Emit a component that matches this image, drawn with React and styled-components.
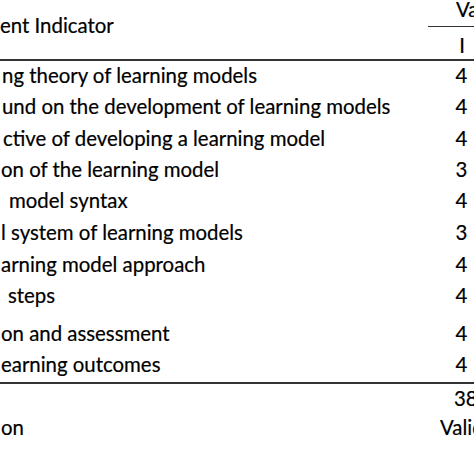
import styled, { createGlobalStyle } from 'styled-components';

const GlobalStyle = createGlobalStyle`
  html, body {
    margin: 0;
    padding: 0;
    background: #ffffff;
    overflow: hidden;
  }
`;

// height = row height in px, pad = extra space above the text
const rows = [
  { text: 'ng theory of learning models', score: 4, offset: 2, height: 31 },
  { text: 'und on the development of learning models', score: 4, offset: 2, height: 32 },
  { text: 'ctive of developing a learning model', score: 4, offset: 3, height: 31 },
  { text: 'on of the learning model', score: 3, offset: -1, height: 31 },
  { text: 'model syntax', score: 4, offset: 9, height: 32 },
  { text: 'l system of learning models', score: 3, offset: 1, height: 32 },
  { text: 'arning model approach', score: 4, offset: -1, height: 31 },
  { text: 'steps', score: 4, offset: 8, height: 31 },
  { text: 'on and assessment', score: 4, offset: -2, height: 38, pad: 7 },
  { text: 'earning outcomes', score: 4, offset: -2, height: 32 },
];

const LINE = 28;
const RULE = '#333333';

const Viewport = styled.div`
  width: 474px;
  height: 474px;
  overflow: hidden;
  font-family: Lato, "Open Sans", sans-serif;
  font-size: 20.4px;
  color: #000000;
  -webkit-text-stroke: 0.2px #000000;
`;

const Table = styled.table`
  border-collapse: collapse;
  table-layout: fixed;
  width: 560px;
  margin-top: -3px;
  white-space: nowrap;
`;

const IndicatorHead = styled.th`
  font-weight: 400;
  text-align: left;
  vertical-align: middle;
  padding: 0 0 5px 0;
  line-height: 24px;
  border-bottom: 2px solid ${RULE};
`;

const GroupHead = styled.th`
  font-weight: 400;
  text-align: left;
  padding: 0 0 5px 28px;
  line-height: 24px;
  border-bottom: 1.5px solid ${RULE};
`;

const SubHead = styled.th`
  font-weight: 400;
  text-align: center;
  padding: 6px 0 1.5px;
  line-height: 24px;
  border-bottom: 2px solid ${RULE};
`;

const BodyCell = styled.td`
  line-height: ${LINE}px;
  padding-top: ${({ $pad }) => $pad}px;
  padding-bottom: ${({ $height, $pad }) => $height - LINE - $pad}px;
  padding-left: ${({ $offset }) => $offset}px;
  text-align: ${({ $center }) => ($center ? 'center' : 'left')};
`;

const FootRow = styled.tr`
  border-top: ${({ $rule }) => ($rule ? `2px solid ${RULE}` : 'none')};
`;

const FootCell = styled.td`
  padding: ${({ $top }) => $top}px 0 0 ${({ $offset }) => $offset}px;
  line-height: ${LINE}px;
`;

export default function App() {
  return (
    <>
      <GlobalStyle />
      <Viewport>
        <Table>
          <colgroup>
            <col style={{ width: 428 }} />
            <col style={{ width: 68 }} />
            <col style={{ width: 64 }} />
          </colgroup>
          <thead>
            <tr>
              <IndicatorHead rowSpan={2}>ent Indicator</IndicatorHead>
              <GroupHead colSpan={2}>Validator</GroupHead>
            </tr>
            <tr>
              <SubHead>I</SubHead>
              <SubHead>II</SubHead>
            </tr>
          </thead>
          <tbody>
            {rows.map((row) => {
              const pad = row.pad || 0;
              return (
                <tr key={row.text}>
                  <BodyCell $offset={row.offset} $pad={pad} $height={row.height}>
                    {row.text}
                  </BodyCell>
                  <BodyCell $center $offset={0} $pad={pad} $height={row.height}>
                    {row.score}
                  </BodyCell>
                  <BodyCell $center $offset={0} $pad={pad} $height={row.height}>
                    4
                  </BodyCell>
                </tr>
              );
            })}
          </tbody>
          <tfoot>
            <FootRow $rule>
              <FootCell $offset={0} $top={0} />
              <FootCell $offset={26} $top={0} colSpan={2}>38</FootCell>
            </FootRow>
            <FootRow>
              <FootCell $offset={-1} $top={0}>on</FootCell>
              <FootCell $offset={12} $top={0} colSpan={2}>Valid</FootCell>
            </FootRow>
          </tfoot>
        </Table>
      </Viewport>
    </>
  );
}
